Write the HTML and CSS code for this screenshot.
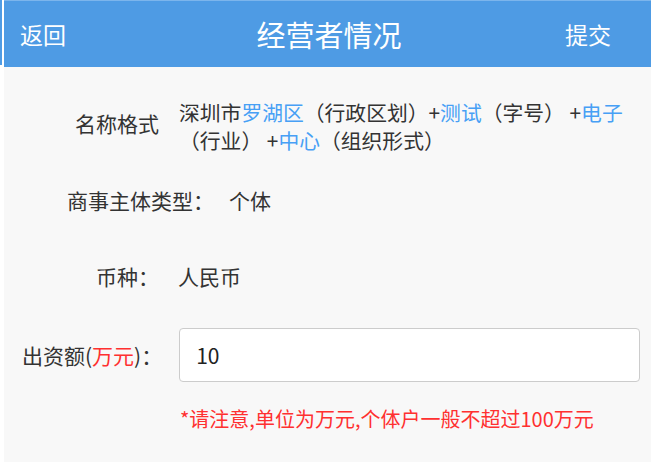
FILE: index.html
```html
<!DOCTYPE html>
<html lang="zh-CN">
<head>
    <meta charset="UTF-8">
    <meta name="viewport" content="width=device-width, initial-scale=1.0">
    <title>经营者情况</title>
    <link rel="stylesheet" href="styles.css">
</head>
<body>
    <div class="edge"><div class="edge-bar"></div></div>
    <div class="page">
        <div class="header">
            <div class="back">返回</div>
            <div class="title">经营者情况</div>
            <div class="submit">提交</div>
        </div>

        <div class="row row-name">
            <div class="label label-name">名称格式</div>
            <div class="value value-name">深圳市<span class="blue">罗湖区</span>（行政区划）+<span class="blue">测试</span>（字号） +<span class="blue">电子</span>（行业） +<span class="blue">中心</span>（组织形式）</div>
        </div>

        <div class="row row-type">
            <div class="label label-type">商事主体类型：</div>
            <div class="value value-type">个体</div>
        </div>

        <div class="row row-currency">
            <div class="label label-currency">币种：</div>
            <div class="value value-currency">人民币</div>
        </div>

        <div class="row row-amount">
            <div class="label label-amount">出资额(<span class="red">万元</span>)：</div>
            <input class="amount-input" type="text" value="10">
        </div>

        <div class="note">*请注意,单位为万元,个体户一般不超过100万元</div>
    </div>
</body>
</html>
```

FILE: styles.css
```css
body {
    margin: 0;
    padding: 0;
    display: flex;
    min-height: 100vh;
    background-color: #ffffff;
    font-family: "Noto Sans CJK SC", "Noto Sans", sans-serif;
    color: #333333;
    font-size: 21px;
    line-height: 28px;
    overflow: hidden;
}
.edge {
    width: 4px;
    flex-shrink: 0;
}
.edge-bar {
    width: 2px;
    height: 65px;
    background-color: #4e9be4;
}
.page {
    flex: 1;
    background-color: #f8f8f8;
}
.header {
    height: 66px;
    display: grid;
    grid-template-columns: 1fr auto 1fr;
    align-items: center;
    background-color: #4e9be4;
    border-top: 1px solid #7cb5ec;
    color: #ffffff;
}
.back {
    font-size: 23px;
    padding-left: 16px;
}
.title {
    font-size: 29px;
    padding-left: 3px;
}
.submit {
    font-size: 23px;
    text-align: right;
    padding-right: 40px;
}
.row {
    display: flex;
    align-items: center;
}
.blue { color: #47a0f5; }
.red { color: #ff3030; }

.row-name {
    margin-top: 31px;
}
.label-name {
    margin-left: 71px;
    padding-bottom: 6px;
    flex-shrink: 0;
}
.value-name {
    margin-left: 20px;
    margin-right: 11px;
    flex: 1;
    font-size: 20.8px;
}

.row-type {
    margin-top: 32px;
}
.label-type {
    margin-left: 63px;
}
.value-type {
    margin-left: 15px;
}

.row-currency {
    margin-top: 48px;
}
.label-currency {
    margin-left: 92px;
}
.value-currency {
    margin-left: 19px;
}

.row-amount {
    margin-top: 38px;
}
.label-amount {
    margin-left: 18px;
    flex-shrink: 0;
}
.amount-input {
    flex: 1;
    min-width: 0;
    height: 54px;
    box-sizing: border-box;
    margin-left: 17px;
    margin-right: 11px;
    padding: 0 16px;
    border: 1px solid #cccccc;
    border-radius: 4px;
    background-color: #ffffff;
    font-family: "Noto Sans CJK SC", "Noto Sans", sans-serif;
    font-size: 21px;
    color: #222222;
    outline: none;
}

.note {
    margin-top: 23px;
    margin-left: 176px;
    font-size: 20px;
    color: #ff3030;
}
```
